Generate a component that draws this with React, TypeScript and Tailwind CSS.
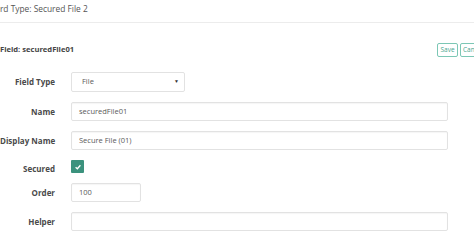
import React from "react";

function Row({ label, children, labelClass = "" }: { label: string; children: React.ReactNode; labelClass?: string }) {
  return (
    <div className="flex items-center gap-[16px]">
      <div className={`w-[55px] shrink-0 text-right text-[8px] font-bold text-[#4a4a4a] whitespace-nowrap ${labelClass}`}>{label}</div>
      {children}
    </div>
  );
}

const inputCls =
  "h-[19px] border border-[#e2e2e2] rounded-[2px] bg-white shadow-[inset_0_1px_1px_rgba(0,0,0,0.04)] flex items-center px-[7px] text-[7.5px] text-[#5a5a5a] whitespace-nowrap";

export default function App() {
  return (
    <div className="w-[474px] h-[244px] overflow-hidden bg-white font-['Open_Sans',sans-serif]">
      <div className="h-[23px] border-b border-[#ececec] pt-[4px]">
        <div className="-ml-[19px] text-[8.4px] leading-[10px] text-[#555] whitespace-nowrap">Record Type: Secured File 2</div>
      </div>
      <div className="mt-[20px] flex items-center justify-between h-[14px]">
        <div className="text-[7.6px] font-bold text-[#444] whitespace-nowrap">Field: securedFile01</div>
        <div className="flex gap-[2px] w-[37px] overflow-visible">
          <div className="h-[14px] w-[21px] shrink-0 border border-[#7cc7b5] rounded-[2px] flex items-center justify-center text-[6.5px] text-[#48a590]">Save</div>
          <div className="h-[14px] px-[2px] shrink-0 border border-[#7cc7b5] rounded-[2px] flex items-center justify-center text-[6.5px] text-[#48a590]">Cancel</div>
        </div>
      </div>
      <div className="mt-[15px] flex flex-col">
        <Row label="Field Type">
          <div className="h-[20px] w-[114px] border border-[#e2e2e2] rounded-[2px] flex items-center justify-between pl-[10px] pr-[5px] text-[7.5px] text-[#5a5a5a]">
            <span>File</span>
            <span className="text-[5px] text-[#333]">▼</span>
          </div>
        </Row>
        <div className="h-[10px]" />
        <Row label="Name">
          <div className={`${inputCls} w-[377px]`}>securedFile01</div>
        </Row>
        <div className="h-[10px]" />
        <Row label="Display Name">
          <div className={`${inputCls} w-[377px]`}>Secure File (01)</div>
        </Row>
        <div className="h-[10px]" />
        <div className="flex items-start gap-[16px] h-[13px]">
          <div className="w-[55px] shrink-0 text-right text-[8px] font-bold text-[#4a4a4a] pt-[4px] leading-[10px]">Secured</div>
          <div className="w-[13px] h-[13px] bg-[#3b927d] rounded-[1px] flex items-center justify-center">
            <svg width="8" height="8" viewBox="0 0 10 10">
              <path d="M2 5.2 L4.2 7.2 L8 2.8" fill="none" stroke="white" strokeWidth="1.6" />
            </svg>
          </div>
        </div>
        <div className="h-[10px]" />
        <Row label="Order">
          <div className={`${inputCls} w-[70px]`}>100</div>
        </Row>
        <div className="h-[10px]" />
        <Row label="Helper">
          <div className={`${inputCls} w-[377px]`}></div>
        </Row>
      </div>
    </div>
  );
}
